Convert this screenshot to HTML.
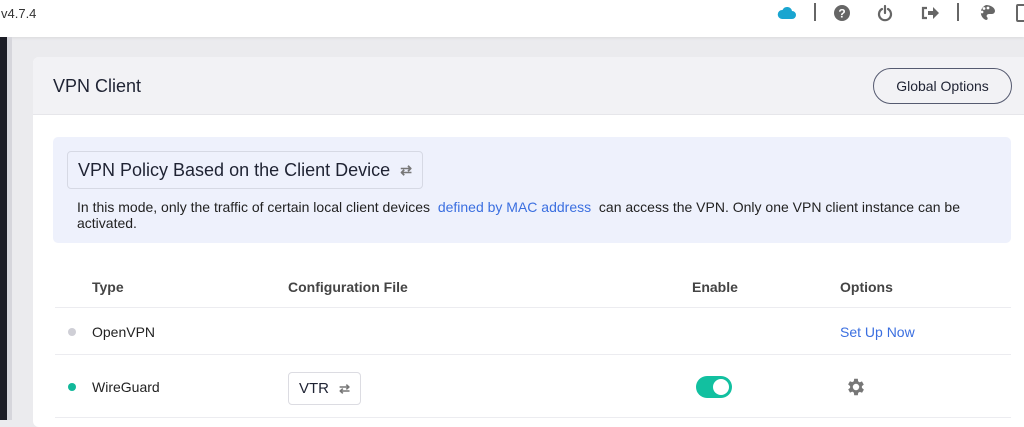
<!DOCTYPE html>
<html><head><style>
*{margin:0;padding:0;box-sizing:border-box}
body{width:1024px;height:420px;overflow:hidden;background:#ebebee;font-family:"Liberation Sans",sans-serif;position:relative;color:#1f2333}
.top{position:absolute;left:0;top:0;width:1024px;height:37px;background:#fff;box-shadow:0 1px 3px rgba(0,0,0,.08)}
.ver{position:absolute;left:1px;top:6px;font-size:13px;color:#333}
.dark{position:absolute;left:0;top:37px;width:7px;height:383px;background:#1c1d26}
.lite{position:absolute;left:7px;top:37px;width:5px;height:383px;background:#d6d6dc}
.card{position:absolute;left:33px;top:57px;width:1000px;height:370px;background:#fff;border-radius:6px;overflow:hidden}
.hd{height:58px;background:#f2f2f5;border-bottom:1px solid #e6e6ea;position:relative}
.hd h1{position:absolute;left:20px;top:19px;font-size:18px;font-weight:normal;color:#1f2333}
.gbtn{position:absolute;left:840px;top:11px;width:139px;height:36px;border:1px solid #555a70;border-radius:18px;font-size:14px;text-align:center;line-height:34px;color:#1f2333}
.info{position:absolute;left:20px;top:80px;width:958px;height:106px;background:#eef1fc;border-radius:5px}
.sel{position:absolute;left:14px;top:14px;width:356px;height:38px;border:1px solid #d6d9e4;border-radius:4px;font-size:18px;line-height:36px;padding-left:10px;color:#1f2333}
.sel span{position:absolute;right:10px;top:0;font-size:14px;font-weight:bold;color:#777}
.txt{position:absolute;left:24px;top:62px;font-size:14px;line-height:16px;color:#222;width:900px}
.txt a{color:#3b6fe0;text-decoration:none}
.th{position:absolute;top:222px;font-size:14px;font-weight:bold;color:#444}
.line{position:absolute;left:22px;width:956px;height:1px;background:#ececf0}
.td{position:absolute;font-size:14px;color:#222}
.dot{position:absolute;width:8px;height:8px;border-radius:50%}
</style></head><body>
<div class="top"><div class="ver">v4.7.4</div>
<svg style="position:absolute;left:777px;top:5px" width="20" height="16" viewBox="0 0 20 16"><path d="M5 14h10a4 4 0 0 0 0-8 5 5 0 0 0-9.5-1A4.5 4.5 0 0 0 5 14z" fill="#1aa5d0"/></svg>
<div style="position:absolute;left:814px;top:3px;width:2px;height:18px;background:#666"></div>
<svg style="position:absolute;left:834px;top:5px" width="16" height="16" viewBox="0 0 16 16"><circle cx="8" cy="8" r="8" fill="#666"/><text x="8" y="12.5" font-size="12" font-weight="bold" text-anchor="middle" fill="#fff" font-family="Liberation Sans">?</text></svg>
<svg style="position:absolute;left:877px;top:4px" width="16" height="18" viewBox="0 0 16 18"><path d="M5 5a6 6 0 1 0 6 0M8 2v7" stroke="#666" stroke-width="2.2" fill="none" stroke-linecap="round"/></svg>
<svg style="position:absolute;left:921px;top:6px" width="18" height="14" viewBox="0 0 18 14"><path d="M6 2H2v10h4" stroke="#666" stroke-width="2.2" fill="none"/><path d="M7 5h5V1l6 6-6 6V9H7z" fill="#666"/></svg>
<div style="position:absolute;left:957px;top:3px;width:2px;height:18px;background:#666"></div>
<svg style="position:absolute;left:977px;top:4px" width="18" height="17" viewBox="0 0 18 17"><path d="M9 1a8 8 0 0 0 0 15c2 0 2-2 1-3s0-3 2-3h3a3 3 0 0 0 3-3C18 4 14 1 9 1z" fill="#666"/><circle cx="5" cy="8" r="1.4" fill="#fff"/><circle cx="7" cy="4.5" r="1.4" fill="#fff"/><circle cx="11" cy="4" r="1.4" fill="#fff"/></svg>
<div style="position:absolute;left:1016px;top:4px;width:10px;height:18px;border:2px solid #666;border-radius:2px"></div>
</div>
<div class="dark"></div><div class="lite"></div>
<div class="card">
<div class="hd"><h1>VPN Client</h1><div class="gbtn">Global Options</div></div>
<div class="info"><div class="sel">VPN Policy Based on the Client Device<span>⇄</span></div>
<div class="txt">In this mode, only the traffic of certain local client devices &nbsp;<a>defined by MAC address</a>&nbsp; can access the VPN. Only one VPN client instance can be activated.</div></div>
<div class="th" style="left:59px">Type</div>
<div class="th" style="left:255px">Configuration File</div>
<div class="th" style="left:659px">Enable</div>
<div class="th" style="left:807px">Options</div>
<div class="line" style="top:250px"></div>
<div class="dot" style="left:35px;top:271px;background:#cfcfd6"></div>
<div class="td" style="left:59px;top:267px">OpenVPN</div>
<div class="td" style="left:807px;top:267px;color:#3b6fe0">Set Up Now</div>
<div class="line" style="top:297px"></div>
<div class="dot" style="left:35px;top:326px;background:#12b89a"></div>
<div class="td" style="left:59px;top:322px">WireGuard</div>
<div style="position:absolute;left:255px;top:315px;width:73px;height:33px;border:1px solid #dcdce2;border-radius:4px;font-size:15px;line-height:31px;padding-left:10px">VTR<span style="position:absolute;right:10px;font-size:13px;font-weight:bold;color:#777">⇄</span></div>
<div style="position:absolute;left:663px;top:319px;width:36px;height:22px;border-radius:11px;background:#12c0a0"><div style="position:absolute;right:3px;top:3px;width:16px;height:16px;border-radius:50%;background:#fff"></div></div>
<svg style="position:absolute;left:812px;top:319px" width="22" height="22" viewBox="0 0 24 24"><path fill="#777" d="M19.4 13a7.5 7.5 0 0 0 0-2l2.1-1.6-2-3.5-2.5 1a7 7 0 0 0-1.7-1L15 3h-4l-.4 2.7a7 7 0 0 0-1.7 1l-2.5-1-2 3.5L6.6 11a7.5 7.5 0 0 0 0 2l-2.1 1.6 2 3.5 2.5-1a7 7 0 0 0 1.7 1L11 21h4l.4-2.7a7 7 0 0 0 1.7-1l2.5 1 2-3.5zM13 15.5a3.5 3.5 0 1 1 0-7 3.5 3.5 0 0 1 0 7z" transform="translate(-1 0)"/></svg>
<div class="line" style="top:360px"></div>
</div>
</body></html>
